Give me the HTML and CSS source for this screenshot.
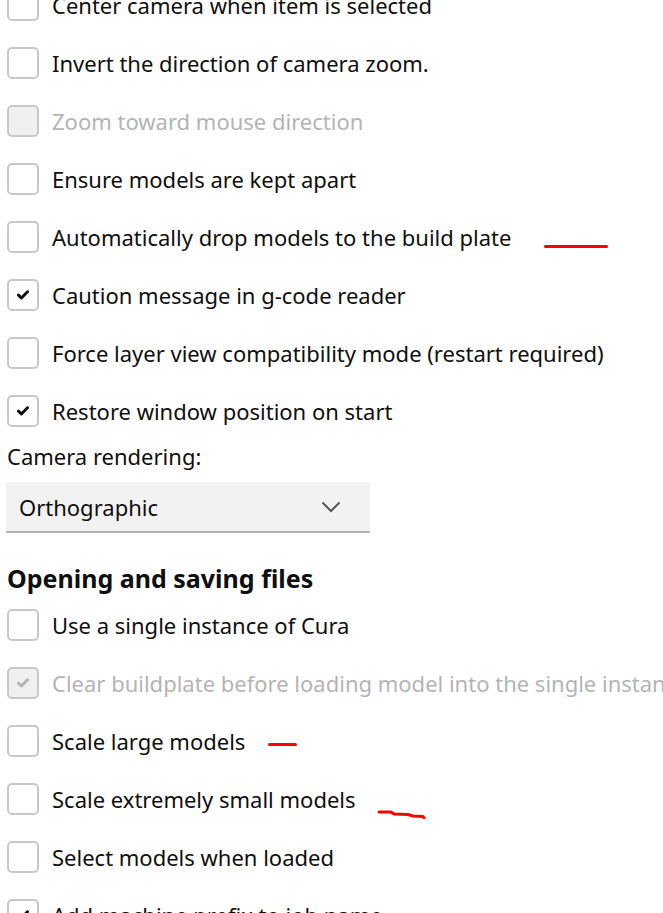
FILE: index.html
```html
<!DOCTYPE html>
<html>
<head>
<meta charset="utf-8">
<link rel="stylesheet" href="styles.css">
</head>
<body>
<div class="page">
  <div class="list first">
    <div class="row"><span class="box"></span><span class="label">Center camera when item is selected</span></div>
    <div class="row"><span class="box"></span><span class="label">Invert the direction of camera zoom.</span></div>
    <div class="row disabled"><span class="box"></span><span class="label">Zoom toward mouse direction</span></div>
    <div class="row"><span class="box"></span><span class="label">Ensure models are kept apart</span></div>
    <div class="row"><span class="box"></span><span class="label">Automatically drop models to the build plate</span><span class="mark mark-long"></span></div>
    <div class="row"><span class="box checked"><svg viewBox="0 0 12 10" class="tick"><path d="M1.5 5.2 L4.4 8 L10.5 1.8" /></svg></span><span class="label">Caution message in g-code reader</span></div>
    <div class="row"><span class="box"></span><span class="label">Force layer view compatibility mode (restart required)</span></div>
    <div class="row"><span class="box checked"><svg viewBox="0 0 12 10" class="tick"><path d="M1.5 5.2 L4.4 8 L10.5 1.8" /></svg></span><span class="label">Restore window position on start</span></div>
  </div>
  <div class="field-label">Camera rendering:</div>
  <div class="combo"><span>Orthographic</span><svg class="chev" viewBox="0 0 20 12"><path d="M1.5 1.5 L10 10 L18.5 1.5"/></svg></div>
  <h2 class="heading">Opening and saving files</h2>
  <div class="list">
    <div class="row"><span class="box"></span><span class="label">Use a single instance of Cura</span></div>
    <div class="row disabled"><span class="box checked"><svg viewBox="0 0 12 10" class="tick"><path d="M1.5 5.2 L4.4 8 L10.5 1.8" /></svg></span><span class="label">Clear buildplate before loading model into the single instance</span></div>
    <div class="row"><span class="box"></span><span class="label">Scale large models</span><span class="mark mark-short"></span></div>
    <div class="row"><span class="box"></span><span class="label">Scale extremely small models</span><svg class="squiggle" viewBox="0 0 50 10"><path d="M2 3 L14 3 L17 5 L31 5.5 L36 7 L46 7.5 L47 9"/></svg></div>
    <div class="row"><span class="box"></span><span class="label">Select models when loaded</span></div>
    <div class="row"><span class="box checked"><svg viewBox="0 0 12 10" class="tick"><path d="M1.5 5.2 L4.4 8 L10.5 1.8" /></svg></span><span class="label">Add machine prefix to job name</span></div>
  </div>
</div>
</body>
</html>
```
FILE: styles.css
```css
html, body {
  margin: 0;
  padding: 0;
  background: #ffffff;
  overflow: hidden;
}
.page {
  width: 663px;
  height: 913px;
  overflow: hidden;
  padding-left: 7px;
  box-sizing: border-box;
  font-family: "Noto Sans", "Open Sans", sans-serif;
  color: #0f0f0f;
  font-size: 22px;
}
.list.first {
  margin-top: -24px;
}
.row {
  height: 58px;
  display: flex;
  align-items: center;
  white-space: nowrap;
}
.box {
  width: 32px;
  height: 32px;
  box-sizing: border-box;
  border: 2px solid #c8c8c8;
  border-radius: 5px;
  background: #ffffff;
  display: flex;
  align-items: center;
  justify-content: center;
  flex: none;
}
.tick {
  width: 12px;
  height: 10px;
}
.tick path {
  fill: none;
  stroke: #0f0f0f;
  stroke-width: 3;
  stroke-linecap: round;
  stroke-linejoin: round;
}
.label {
  margin-left: 13px;
  line-height: 28px;
}
.disabled .box {
  background: #f0f0f0;
}
.disabled .tick path {
  stroke: #b4b4b4;
}
.disabled .label {
  color: #b4b4b4;
}
.mark {
  display: block;
  height: 3px;
  background: #ff0000;
  border-radius: 2px;
  position: relative;
}
.mark-long {
  width: 64px;
  margin-left: 33px;
  top: 9px;
}
.mark-short {
  width: 29px;
  margin-left: 23px;
  top: 3px;
}
.squiggle {
  width: 50px;
  height: 10px;
  margin-left: 21px;
  position: relative;
  top: 15px;
}
.squiggle path {
  fill: none;
  stroke: #ff0000;
  stroke-width: 3;
  stroke-linecap: round;
  stroke-linejoin: round;
}
.field-label {
  line-height: 28px;
  margin-top: 2px;
}
.combo {
  margin-top: 12px;
  width: 364px;
  height: 51px;
  box-sizing: border-box;
  margin-left: -1px;
  background: #f2f2f2;
  border-bottom: 2px solid #b4b4b4;
  display: flex;
  align-items: center;
  justify-content: space-between;
  padding: 0 29px 0 13px;
}
.chev {
  width: 20px;
  height: 12px;
}
.chev path {
  fill: none;
  stroke: #555555;
  stroke-width: 2;
}
.heading {
  margin: 0;
  margin-top: 30px;
  font-size: 25px;
  font-weight: bold;
  line-height: 30px;
}
.heading + .list {
  margin-top: 3px;
}
```
